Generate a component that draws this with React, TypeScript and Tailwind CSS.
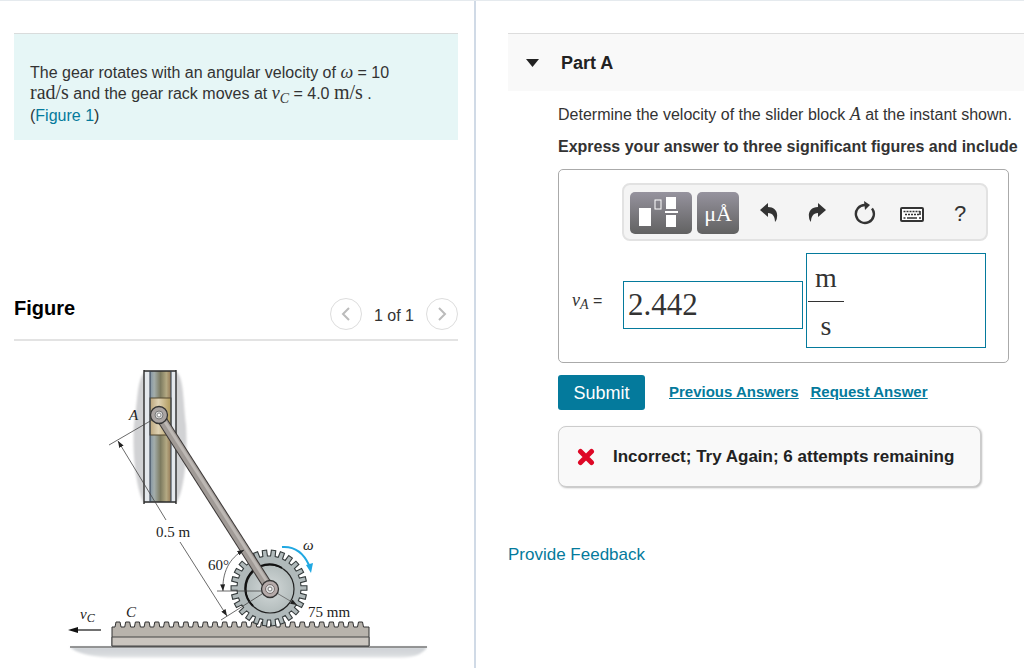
import type { ReactNode } from "react";

const GEAR = { x: 269, y: 588, teeth: 26, outer: 38, root: 32 };

function gearPath() {
    const { x, y, teeth, outer, root } = GEAR;
    const step = (Math.PI * 2) / teeth;
    const points: string[] = [];
    for (let i = 0; i < teeth; i++) {
        const a = i * step;
        const corners = [
            [root, a - step * 0.3],
            [outer, a - step * 0.24],
            [outer, a + step * 0.24],
            [root, a + step * 0.3],
        ];
        for (const [r, t] of corners) {
            points.push(`${(x + r * Math.cos(t)).toFixed(2)} ${(y + r * Math.sin(t)).toFixed(2)}`);
        }
    }
    return `M${points.join("L")}Z`;
}

function rackPath() {
    let d = "M112 646V627H115";
    for (let x = 115; x < 362; x += 9.7) {
        d += `L${x + 1} 622H${x + 5}L${x + 6} 627H${x + 9.7}`;
    }
    return d + "H369V646Z";
}

const Var = ({ children }: { children: ReactNode }) => (
    <i className="font-['Liberation_Serif',serif] text-lg leading-[0px]">{children}</i>
);

const Unit = ({ children }: { children: ReactNode }) => (
    <span className="font-['Liberation_Serif',serif] text-xl leading-[0px]">{children}</span>
);

const GearFigure = () => (
    <svg viewBox="14 341 444 327" className="block w-full h-auto" role="img" aria-label="Gear and slider mechanism">
        <defs>
            <linearGradient id="cylinder">
                <stop offset="0" stopColor="#8193a3" />
                <stop offset=".2" stopColor="#a3adab" />
                <stop offset=".5" stopColor="#7d7b60" />
                <stop offset=".78" stopColor="#b3a983" />
                <stop offset="1" stopColor="#977a55" />
            </linearGradient>
            <linearGradient id="block">
                <stop offset="0" stopColor="#bba57c" />
                <stop offset=".4" stopColor="#dfd2b4" />
                <stop offset="1" stopColor="#b0995a" />
            </linearGradient>
            <linearGradient id="ground" x2="0" y2="1">
                <stop offset="0" stopColor="#cdd1d5" />
                <stop offset=".7" stopColor="#d8dbde" />
                <stop offset="1" stopColor="#eff0f1" />
            </linearGradient>
            <radialGradient id="disc">
                <stop offset="0" stopColor="#d3d9d9" />
                <stop offset="1" stopColor="#b3bcbc" />
            </radialGradient>
            <filter id="soft" x="-20%" y="-20%" width="140%" height="140%">
                <feGaussianBlur stdDeviation="1" />
            </filter>
            <marker id="arrow" viewBox="0 0 8 6" markerWidth="7" markerHeight="5" refX="8" refY="3" orient="auto-start-reverse" markerUnits="userSpaceOnUse">
                <path d="M8 3 0 0V6Z" fill="#222" />
            </marker>
        </defs>

        {/* guide */}
        <path d="M145 372C137 378 138 400 134 424C132 455 136 485 143 502H177C184 490 188 455 186 425C183 400 184 380 177 372Z" fill="#d1d2d4" filter="url(#soft)" />
        <rect x="144" y="371" width="32" height="131" fill="#e4e8ec" />
        <rect x="150" y="371" width="21" height="131" fill="url(#cylinder)" />
        <rect x="150" y="398" width="21" height="37" fill="url(#block)" stroke="#54492f" />
        <path d="M144 370V504M176 370V504M144 371H176M144 502H176" fill="none" stroke="#2b2b2b" strokeWidth="1.4" />
        <path d="M150 371V502M171 371V502" stroke="#384453" strokeWidth="1.1" />

        {/* ground and rack */}
        <path d="M70 647H427C424 653 416 657 402 658H110C88 656 76 653 70 647Z" fill="url(#ground)" filter="url(#soft)" />
        <path d="M70 647H427" stroke="#777" strokeWidth="1.4" />
        <path d={rackPath()} fill="#b8b3ac" stroke="#333" />
        <path d="M112 637H369V646H112Z" fill="#cac5bf" stroke="#444" />

        {/* gear */}
        <path d={gearPath()} fill="#b0b9ba" stroke="#353b3c" strokeWidth="1.1" />
        <circle cx="270" cy="589" r="24" fill="url(#disc)" stroke="#222" strokeWidth="1.2" />
        <path d="M282 568A24 24 0 0 0 253 606" fill="none" stroke="#111" strokeWidth="2" />
        <path d="M270 589 297 605" stroke="#555" strokeWidth=".7" markerEnd="url(#arrow)" />

        {/* connecting rod */}
        <path d="M159 415 270 589" stroke="#3a3635" strokeWidth="10" />
        <path d="M159 415 270 589" stroke="#a09a96" strokeWidth="8" />
        <path d="M160 414 271 588" stroke="#bdb8b4" strokeWidth="3" />
        <circle cx="159" cy="415" r="8.5" fill="#aaa4a2" stroke="#333" strokeWidth="1.3" />
        <circle cx="159" cy="415" r="4" fill="#ddd" stroke="#777" />
        <circle cx="159" cy="415" r="2" fill="#fff" stroke="#888" />
        <circle cx="270" cy="589" r="8.5" fill="#b5aaa9" stroke="#333" strokeWidth="1.3" />
        <circle cx="270" cy="589" r="4.5" fill="#ddd" stroke="#776e6d" />
        <circle cx="270" cy="589" r="2" fill="#fff" stroke="#777" />

        {/* dimensions */}
        <g fill="none" stroke="#444" strokeWidth=".8">
            <path d="M152 420 109 445M262 594 221 620M217 591H262" />
            <path d="M166 520 118 441" markerEnd="url(#arrow)" />
            <path d="M180 542 227 616" markerEnd="url(#arrow)" />
            <path d="M223 591C222 573 229 558 244 550" markerStart="url(#arrow)" markerEnd="url(#arrow)" />
        </g>
        <path d="M101 630H77" stroke="#111" strokeWidth="1.2" />
        <path d="M68 630 78 627V633Z" fill="#111" />
        <path d="M282 547C295 546 304 554 309 565" fill="none" stroke="#20a8e2" strokeWidth="2" />
        <path d="M306 565 313 563 311 573Z" fill="#20a8e2" />

        <g fill="#222" fontFamily="Liberation Serif, serif" fontSize="15">
            <text x="129" y="420" fontStyle="italic">A</text>
            <text x="156" y="537">0.5 m</text>
            <text x="208" y="570">60°</text>
            <text x="308" y="617">75 mm</text>
            <text x="303" y="550" fontStyle="italic">ω</text>
            <text x="126" y="617" fontStyle="italic">C</text>
            <text x="80" y="619" fontStyle="italic">v<tspan dy="3" fontSize="12">C</tspan></text>
        </g>
    </svg>
);

const UndoIcon = () => (
    <svg viewBox="0 0 18 20" className="w-[18px] h-5" fill="#333">
        <path d="M0 7 8 0V4C14 4 18 8 17 14C17 16 16 18 15 19C15 14 13 10 8 10V14Z" />
    </svg>
);

const ResetIcon = () => (
    <svg viewBox="0 0 22 24" className="w-[22px] h-6">
        <path d="M11 4A9 9 0 1 0 18 7.500" fill="none" stroke="#333" strokeWidth="2.4" />
        <path d="M10 0 16 4 11 9Z" fill="#333" />
    </svg>
);

const KeyboardIcon = () => (
    <svg viewBox="0 0 24 20" className="w-6 h-5">
        <rect x="1" y="5" width="22" height="13" rx="1" fill="#fff" stroke="#333" strokeWidth="2" />
        <path d="M3.500 8.500H20M5 11.500H20" stroke="#333" strokeWidth="1.6" strokeDasharray="2 1" />
        <path d="M3.500 15H5.500M7 15H17M19 15H21M20 8V12" stroke="#333" strokeWidth="1.6" />
    </svg>
);

const toolbarButton = "w-6 h-8 flex items-center justify-center text-[#333]";
const gradientButton = "h-[42px] rounded-[5px] bg-linear-to-b from-[#96939e] to-[#626262] text-white flex items-center justify-center";

const AnswerBox = () => (
    <div className="w-[451px] h-[194px] border border-[#aaa] rounded-[5px] pt-[13px] px-[13px]">
        <div className="ml-[50px] w-[366px] h-[58px] flex items-center px-[6px] pt-0.5 border-2 border-[#e2e2e2] rounded-lg bg-[#f4f4f4]">
            <button type="button" aria-label="Templates" className={`${gradientButton} w-[62px]`}>
                <svg viewBox="0 0 62 42" className="w-[62px] h-[42px]">
                    <path d="M9 16H21V34H9ZM36 5H46V17H36ZM36 23H46V35H36ZM35 19H48V21H35Z" fill="#fff" />
                    <rect x="25" y="8" width="6" height="9" fill="none" stroke="#fff" />
                </svg>
            </button>
            <button type="button" aria-label="Units" className={`${gradientButton} w-[42px] ml-[5px] font-['Liberation_Serif',serif] text-[22px]`}>μÅ</button>
            <div className="flex-1 flex justify-between pl-[18px] pr-[8px]">
                <button type="button" aria-label="Undo" className={toolbarButton}><UndoIcon /></button>
                <button type="button" aria-label="Redo" className={`${toolbarButton} -scale-x-100`}><UndoIcon /></button>
                <button type="button" aria-label="Reset" className={toolbarButton}><ResetIcon /></button>
                <button type="button" aria-label="Keyboard shortcuts" className={toolbarButton}><KeyboardIcon /></button>
                <button type="button" aria-label="Help" className={`${toolbarButton} text-[22px]`}>?</button>
            </div>
        </div>
        <div className="flex items-center mt-3">
            <label htmlFor="value" className="w-[51px] text-base">
                <Var>v<sub className="text-sm">A</sub></Var> =
            </label>
            <input id="value" defaultValue="2.442" className="w-[180px] h-12 mt-2 border border-[#047a9c] px-1 font-['Liberation_Serif',serif] text-[31px] text-[#333]" />
            <div className="w-[180px] h-[95px] ml-[3px] border border-[#047a9c] px-px flex font-['Liberation_Serif',serif] text-[28px] text-[#333]">
                <div className="w-9 flex flex-col text-center">
                    <span className="h-12 leading-[48px] border-b border-[#333]">m</span>
                    <span className="h-12 leading-[48px]">s</span>
                </div>
            </div>
        </div>
    </div>
);

export default function App() {
    return (
        <div className="min-h-screen grid grid-cols-[476px_minmax(0,1fr)] border-t border-[#e5eaee] bg-white font-['Liberation_Sans',Arial,sans-serif] text-base text-[#333]">
            <aside className="border-r-2 border-[#d0dae6] pt-8 pl-[14px] pr-4">
                <div className="border-t border-[#d9dcdc] bg-[#e6f6f6] pt-7 pb-[14px] px-4 leading-[21px]">
                    <p>
                        The gear rotates with an angular velocity of <Var>ω</Var> = 10<br />
                        <Unit>rad/s</Unit> and the gear rack moves at <Var>v<sub className="text-sm">C</sub></Var> = 4.0 <Unit>m/s</Unit> .<br />
                        (<a href="#figure" className="text-[#047a9c]">Figure 1</a>)
                    </p>
                </div>
                <div className="mt-[156px] h-[45px] flex justify-between items-start border-b-2 border-[#e3e3e3]">
                    <h2 className="text-xl leading-6 font-bold text-black">Figure</h2>
                    <div className="mt-0.5 flex items-center gap-3">
                        <button type="button" aria-label="Previous figure" className="w-8 h-8 rounded-full border border-[#ddd] flex items-center justify-center">
                            <svg viewBox="0 0 10 16" className="w-[10px] h-4"><path d="M8 2 2 8 8 14" fill="none" stroke="#bbb" strokeWidth="2" /></svg>
                        </button>
                        <span className="pt-1">1 of 1</span>
                        <button type="button" aria-label="Next figure" className="w-8 h-8 rounded-full border border-[#ddd] flex items-center justify-center">
                            <svg viewBox="0 0 10 16" className="w-[10px] h-4"><path d="M2 2 8 8 2 14" fill="none" stroke="#bbb" strokeWidth="2" /></svg>
                        </button>
                    </div>
                </div>
                <div id="figure"><GearFigure /></div>
            </aside>

            <main className="pt-8 pl-8 overflow-hidden">
                <button type="button" className="w-full h-[58px] flex items-center gap-[22px] pl-[18px] border-t border-[#ddd] bg-[#f9f9f9] text-lg font-bold text-[#222]">
                    <svg viewBox="0 0 13 8" className="w-[13px] h-2"><path d="M0 0H13L6.5 8Z" fill="#222" /></svg>
                    Part A
                </button>
                <div className="pl-[50px] whitespace-nowrap">
                    <p className="mt-3 leading-6">Determine the velocity of the slider block <Var>A</Var> at the instant shown.</p>
                    <p className="mt-2 mb-[10px] leading-6 font-bold">Express your answer to three significant figures and include</p>
                    <AnswerBox />
                    <div className="mt-3 flex items-center">
                        <button type="button" className="w-[87px] h-[35px] rounded-[3px] bg-[#047a9c] text-lg text-white">Submit</button>
                        <div className="ml-6 flex gap-3 text-[15px] font-bold text-[#047a9c] underline">
                            <a href="#previous">Previous Answers</a>
                            <a href="#request">Request Answer</a>
                        </div>
                    </div>
                    <div className="mt-4 w-[423px] h-[61px] flex items-center gap-[18px] pl-[18px] rounded-lg border border-[#ccc] bg-[#f9f9f9] shadow-[1px_1px_2px_#bbb] text-[17px] font-bold text-[#222]">
                        <svg viewBox="0 0 18 18" className="w-[18px] h-[18px]"><path d="M3.500 3.500 14.500 14.500M14.500 3.500 3.500 14.500" stroke="#de0826" strokeWidth="5" strokeLinecap="round" /></svg>
                        Incorrect; Try Again; 6 attempts remaining
                    </div>
                </div>
                <a href="#feedback" className="inline-block mt-14 text-[17px] leading-6 text-[#047a9c]">Provide Feedback</a>
            </main>
        </div>
    );
}
